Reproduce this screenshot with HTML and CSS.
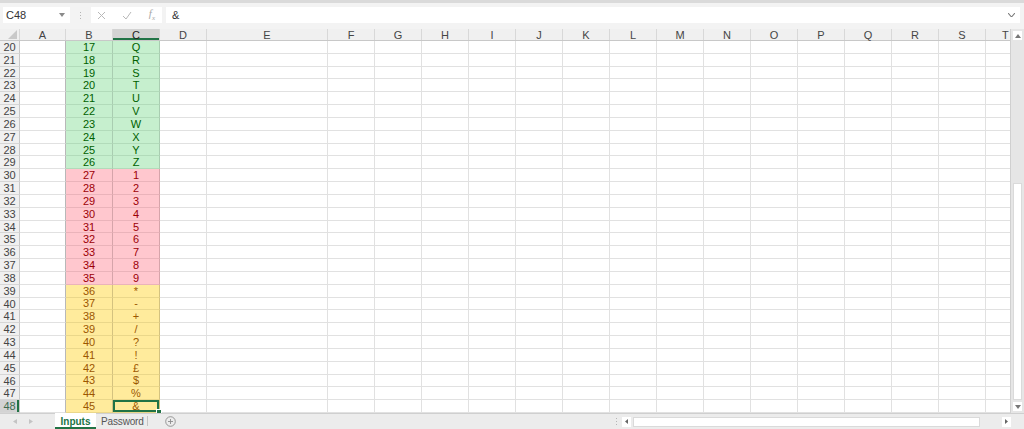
FILE: index.html
```html
<!DOCTYPE html>
<html>
<head>
<meta charset="utf-8">
<link rel="stylesheet" href="styles.css">
</head>
<body>
<div class="app">
  <div class="topband"></div>
  <div class="fbar">
    <div class="namebox"><span>C48</span><svg class="dd" width="6" height="4" viewBox="0 0 6 4"><path d="M0 0 L6 0 L3 4 Z" fill="#8a8a8a"/></svg></div>
    <div class="handle"><i></i><i></i><i></i></div>
    <div class="fxbox">
      <svg width="9" height="9" viewBox="0 0 9 9"><path d="M1 1 L8 8 M8 1 L1 8" stroke="#b8b8b8" stroke-width="1" fill="none"/></svg>
      <svg width="10" height="9" viewBox="0 0 10 9"><path d="M1 5 L4 8 L9 1" stroke="#b8b8b8" stroke-width="1" fill="none"/></svg>
      <span class="fx">f<sub>x</sub></span>
    </div>
    <div class="finput"><span>&amp;</span><svg class="dd2" width="7" height="4" viewBox="0 0 7 4"><path d="M0 0 L3.5 4 L7 0" stroke="#7a7a7a" stroke-width="1.1" fill="none"/></svg></div>
  </div>
  <div class="main">
    <div class="grid">
      <div class="hdr">
        <div class="corner"><svg width="9" height="9" viewBox="0 0 9 9"><path d="M9 0 L9 9 L0 9 Z" fill="#c9c9c9"/></svg></div>
        <div class="h a">A</div><div class="h b">B</div><div class="h cc sel">C</div><div class="h d">D</div><div class="h e">E</div>
        <div class="h">F</div><div class="h">G</div><div class="h">H</div><div class="h">I</div><div class="h">J</div><div class="h">K</div><div class="h">L</div><div class="h">M</div><div class="h">N</div><div class="h">O</div><div class="h">P</div><div class="h">Q</div><div class="h">R</div><div class="h">S</div><div class="h tcol">T</div>
      </div>
      <div class="row g"><div class="rh">20</div><div class="c a"></div><div class="c b">17</div><div class="c cc">Q</div><div class="c d"></div><div class="c e"></div><div class="rest"></div></div>
      <div class="row g"><div class="rh">21</div><div class="c a"></div><div class="c b">18</div><div class="c cc">R</div><div class="c d"></div><div class="c e"></div><div class="rest"></div></div>
      <div class="row g"><div class="rh">22</div><div class="c a"></div><div class="c b">19</div><div class="c cc">S</div><div class="c d"></div><div class="c e"></div><div class="rest"></div></div>
      <div class="row g"><div class="rh">23</div><div class="c a"></div><div class="c b">20</div><div class="c cc">T</div><div class="c d"></div><div class="c e"></div><div class="rest"></div></div>
      <div class="row g"><div class="rh">24</div><div class="c a"></div><div class="c b">21</div><div class="c cc">U</div><div class="c d"></div><div class="c e"></div><div class="rest"></div></div>
      <div class="row g"><div class="rh">25</div><div class="c a"></div><div class="c b">22</div><div class="c cc">V</div><div class="c d"></div><div class="c e"></div><div class="rest"></div></div>
      <div class="row g"><div class="rh">26</div><div class="c a"></div><div class="c b">23</div><div class="c cc">W</div><div class="c d"></div><div class="c e"></div><div class="rest"></div></div>
      <div class="row g"><div class="rh">27</div><div class="c a"></div><div class="c b">24</div><div class="c cc">X</div><div class="c d"></div><div class="c e"></div><div class="rest"></div></div>
      <div class="row g"><div class="rh">28</div><div class="c a"></div><div class="c b">25</div><div class="c cc">Y</div><div class="c d"></div><div class="c e"></div><div class="rest"></div></div>
      <div class="row g"><div class="rh">29</div><div class="c a"></div><div class="c b">26</div><div class="c cc">Z</div><div class="c d"></div><div class="c e"></div><div class="rest"></div></div>
      <div class="row r"><div class="rh">30</div><div class="c a"></div><div class="c b">27</div><div class="c cc">1</div><div class="c d"></div><div class="c e"></div><div class="rest"></div></div>
      <div class="row r"><div class="rh">31</div><div class="c a"></div><div class="c b">28</div><div class="c cc">2</div><div class="c d"></div><div class="c e"></div><div class="rest"></div></div>
      <div class="row r"><div class="rh">32</div><div class="c a"></div><div class="c b">29</div><div class="c cc">3</div><div class="c d"></div><div class="c e"></div><div class="rest"></div></div>
      <div class="row r"><div class="rh">33</div><div class="c a"></div><div class="c b">30</div><div class="c cc">4</div><div class="c d"></div><div class="c e"></div><div class="rest"></div></div>
      <div class="row r"><div class="rh">34</div><div class="c a"></div><div class="c b">31</div><div class="c cc">5</div><div class="c d"></div><div class="c e"></div><div class="rest"></div></div>
      <div class="row r"><div class="rh">35</div><div class="c a"></div><div class="c b">32</div><div class="c cc">6</div><div class="c d"></div><div class="c e"></div><div class="rest"></div></div>
      <div class="row r"><div class="rh">36</div><div class="c a"></div><div class="c b">33</div><div class="c cc">7</div><div class="c d"></div><div class="c e"></div><div class="rest"></div></div>
      <div class="row r"><div class="rh">37</div><div class="c a"></div><div class="c b">34</div><div class="c cc">8</div><div class="c d"></div><div class="c e"></div><div class="rest"></div></div>
      <div class="row r"><div class="rh">38</div><div class="c a"></div><div class="c b">35</div><div class="c cc">9</div><div class="c d"></div><div class="c e"></div><div class="rest"></div></div>
      <div class="row y"><div class="rh">39</div><div class="c a"></div><div class="c b">36</div><div class="c cc">*</div><div class="c d"></div><div class="c e"></div><div class="rest"></div></div>
      <div class="row y"><div class="rh">40</div><div class="c a"></div><div class="c b">37</div><div class="c cc">-</div><div class="c d"></div><div class="c e"></div><div class="rest"></div></div>
      <div class="row y"><div class="rh">41</div><div class="c a"></div><div class="c b">38</div><div class="c cc">+</div><div class="c d"></div><div class="c e"></div><div class="rest"></div></div>
      <div class="row y"><div class="rh">42</div><div class="c a"></div><div class="c b">39</div><div class="c cc">/</div><div class="c d"></div><div class="c e"></div><div class="rest"></div></div>
      <div class="row y"><div class="rh">43</div><div class="c a"></div><div class="c b">40</div><div class="c cc">?</div><div class="c d"></div><div class="c e"></div><div class="rest"></div></div>
      <div class="row y"><div class="rh">44</div><div class="c a"></div><div class="c b">41</div><div class="c cc">!</div><div class="c d"></div><div class="c e"></div><div class="rest"></div></div>
      <div class="row y"><div class="rh">45</div><div class="c a"></div><div class="c b">42</div><div class="c cc">£</div><div class="c d"></div><div class="c e"></div><div class="rest"></div></div>
      <div class="row y"><div class="rh">46</div><div class="c a"></div><div class="c b">43</div><div class="c cc">$</div><div class="c d"></div><div class="c e"></div><div class="rest"></div></div>
      <div class="row y"><div class="rh">47</div><div class="c a"></div><div class="c b">44</div><div class="c cc">%</div><div class="c d"></div><div class="c e"></div><div class="rest"></div></div>
      <div class="row y last"><div class="rh selr">48</div><div class="c a"></div><div class="c b">45</div><div class="c cc active">&amp;<span class="fill-handle"></span></div><div class="c d"></div><div class="c e"></div><div class="rest"></div></div>
    </div>
    <div class="vscroll">
      <div class="vbtn up"><svg width="6" height="4" viewBox="0 0 6 4"><path d="M0 4 L3 0 L6 4 Z" fill="#777"/></svg></div>
      <div class="vtrack top"></div>
      <div class="vthumb"></div>
      <div class="vbtn down"><svg width="6" height="4" viewBox="0 0 6 4"><path d="M0 0 L3 4 L6 0 Z" fill="#777"/></svg></div>
    </div>
  </div>
  <div class="tabs">
    <div class="navs">
      <svg width="4" height="5" viewBox="0 0 4 5"><path d="M4 0 L0 2.5 L4 5 Z" fill="#c4c4c4"/></svg>
      <svg width="4" height="5" viewBox="0 0 4 5"><path d="M0 0 L4 2.5 L0 5 Z" fill="#c4c4c4"/></svg>
    </div>
    <div class="tab active-tab">Inputs</div>
    <div class="tab pw">Password</div>
    <div class="tsep"></div>
    <div class="add"><svg width="11" height="11" viewBox="0 0 11 11"><circle cx="5.5" cy="5.5" r="4.8" fill="none" stroke="#8d8d8d" stroke-width="0.9"/><path d="M5.5 3 V8 M3 5.5 H8" stroke="#8d8d8d" stroke-width="0.9"/></svg></div>
    <div class="hs">
      <div class="hdots"><i></i><i></i><i></i></div>
      <div class="hbtn"><svg width="3" height="5" viewBox="0 0 3 5"><path d="M3 0 L0 2.5 L3 5 Z" fill="#666"/></svg></div>
      <div class="hthumb"></div>
      <div class="htrack"></div>
      <div class="hbtn"><svg width="3" height="5" viewBox="0 0 3 5"><path d="M0 0 L3 2.5 L0 5 Z" fill="#666"/></svg></div>
    </div>
  </div>
</div>
</body>
</html>
```

FILE: styles.css
```css
html, body {
  margin: 0;
  padding: 0;
}
body {
  width: 1024px;
  height: 429px;
  overflow: hidden;
  background: #f1f1f1;
  font-family: "Liberation Sans", Arial, sans-serif;
  font-size: 11px;
  color: #333;
}
.app {
  display: flex;
  flex-direction: column;
  height: 429px;
}
.topband {
  height: 3px;
  background: #dadada;
  flex: none;
}
.fbar {
  height: 26px;
  flex: none;
  display: flex;
  align-items: flex-start;
  padding-top: 4px;
  box-sizing: border-box;
  background: #f3f3f3;
}
.namebox {
  margin-left: 3px;
  width: 67px;
  height: 16px;
  background: #fff;
  display: flex;
  align-items: center;
  justify-content: space-between;
  padding: 0 5px 0 3px;
  box-sizing: border-box;
  font-size: 11px;
  color: #333;
}
.handle {
  width: 21px;
  height: 16px;
  display: flex;
  flex-direction: column;
  align-items: center;
  justify-content: center;
  gap: 2px;
}
.handle i, .hdots i {
  display: block;
  width: 1px;
  height: 1px;
  background: #b5b5b5;
}
.fxbox {
  width: 71px;
  height: 16px;
  background: #fff;
  display: flex;
  align-items: center;
  justify-content: space-between;
  padding: 0 7px 0 6px;
  box-sizing: border-box;
}
.fx {
  font-family: "Liberation Serif", serif;
  font-style: italic;
  color: #a8a8a8;
  font-size: 11px;
}
.fx sub {
  font-size: 7px;
}
.finput {
  margin-left: 4px;
  width: 854px;
  height: 16px;
  background: #fff;
  display: flex;
  align-items: center;
  justify-content: space-between;
  padding: 0 5px 0 6px;
  box-sizing: border-box;
  font-size: 11px;
  color: #333;
}
.main {
  height: 384px;
  flex: none;
  display: flex;
  background: #fff;
}
.grid {
  width: 1010px;
  overflow: hidden;
  flex: none;
}
.hdr {
  height: 11px;
  display: flex;
  background: #f0f0f0;
  border-bottom: 1px solid #c8c8c8;
  box-sizing: content-box;
}
.hdr > div {
  flex: none;
  box-sizing: border-box;
  height: 11px;
  line-height: 12px;
  text-align: center;
  color: #454545;
  font-size: 11px;
  border-right: 1px solid #d8d8d8;
}
.corner {
  width: 20px;
  display: flex;
  align-items: flex-end;
  justify-content: flex-end;
  padding: 0 2px 1px 0;
  box-sizing: border-box;
}
.h { width: 47px; }
.hdr .tcol {
  text-align: left;
  padding-left: 16px;
}
.a { width: 46px; }
.b { width: 47px; }
.cc { width: 47px; }
.d { width: 47px; }
.e { width: 121px; }
.hdr .sel {
  background: #d3d3d3;
  color: #1f1f1f;
  box-shadow: inset 0 -2px 0 #217346;
}
.row {
  height: 12.83px;
  display: flex;
}
.row > div {
  flex: none;
  box-sizing: border-box;
  border-bottom: 1px solid #e1e1e1;
}
.rh {
  width: 20px;
  background: #f0f0f0;
  border-right: 1px solid #c8c8c8;
  color: #444;
  text-align: center;
  font-size: 11px;
  line-height: 12px;
  border-bottom-color: #d6d6d6 !important;
}
.rh.selr {
  background: #d3d3d3;
  color: #3d6b50;
  box-shadow: inset -2px 0 0 #217346;
}
.c {
  border-right: 1px solid #e1e1e1;
  display: flex;
  align-items: center;
  justify-content: center;
  font-size: 11px;
  line-height: 12px;
}
.rest {
  flex: 1 1 auto !important;
  background-image: linear-gradient(to right, transparent 46px, #e1e1e1 46px, #e1e1e1 47px);
  background-size: 47px 100%;
  background-repeat: repeat-x;
}
.g .b, .g .cc {
  background: #c6efce;
  color: #006100;
  border-right-color: #a9cdb1;
  border-bottom-color: #b2dbba;
}
.r .b, .r .cc {
  background: #ffc7ce;
  color: #9c0006;
  border-right-color: #d6a4aa;
  border-bottom-color: #eab3ba;
}
.y .b, .y .cc {
  background: #ffeb9c;
  color: #9c5700;
  border-right-color: #d4c27f;
  border-bottom-color: #ead78a;
}
.g .a, .r .a, .y .a {
  border-right-color: #b8b8b8;
}
.cc.active {
  position: relative;
  box-shadow: inset 0 0 0 2px #217346;
  color: #9c5700;
}
.fill-handle {
  position: absolute;
  right: -3px;
  bottom: -3px;
  width: 4px;
  height: 4px;
  background: #217346;
  border: 1px solid #fff;
}
.vscroll {
  width: 14px;
  flex: none;
  background: #e6e6e6;
  display: flex;
  flex-direction: column;
  align-items: flex-start;
  border-left: 1px solid #d0d0d0;
  box-sizing: border-box;
}
.vbtn {
  width: 9px;
  height: 9px;
  background: #fff;
  margin-left: 2px;
  display: flex;
  align-items: center;
  justify-content: center;
  flex: none;
}
.vbtn.up { margin-top: 2px; }
.vtrack.top {
  height: 143px;
  flex: none;
}
.vthumb {
  width: 9px;
  margin-left: 2px;
  height: 217px;
  background: #fff;
  flex: none;
  border: 1px solid #dadada;
  box-sizing: border-box;
}
.vbtn.down { margin-top: 2px; }
.tabs {
  height: 16px;
  flex: none;
  display: flex;
  align-items: stretch;
  background: #ececec;
  border-top: 1px solid #cfcfcf;
  box-sizing: border-box;
}
.navs {
  width: 55px;
  display: flex;
  align-items: center;
  gap: 12px;
  padding-left: 13px;
  box-sizing: border-box;
}
.tab {
  display: flex;
  align-items: center;
  color: #555;
  font-size: 10px;
}
.pw {
  width: 51px;
  box-sizing: border-box;
  padding-left: 5px;
  letter-spacing: -0.15px;
}
.active-tab {
  width: 41px;
  box-sizing: border-box;
  justify-content: center;
  background: #fff;
  color: #217346;
  font-weight: bold;
  box-shadow: inset 0 -2px 0 #217346;
  margin-top: -1px;
}
.tsep {
  width: 1px;
  background: #c4c4c4;
  margin: 2px 0 3px 0;
}
.add {
  margin-left: 17px;
  display: flex;
  align-items: center;
}
.hs {
  margin-left: auto;
  width: 414px;
  display: flex;
  align-items: center;
}
.hdots {
  width: 12px;
  display: flex;
  flex-direction: column;
  align-items: center;
  gap: 2px;
}
.hbtn {
  width: 9px;
  height: 10px;
  background: #fff;
  display: flex;
  align-items: center;
  justify-content: center;
  flex: none;
}
.hthumb {
  margin-left: 2px;
  width: 347px;
  height: 10px;
  background: #fff;
  border: 1px solid #dadada;
  box-sizing: border-box;
}
.htrack {
  width: 22px;
  height: 10px;
}
```
